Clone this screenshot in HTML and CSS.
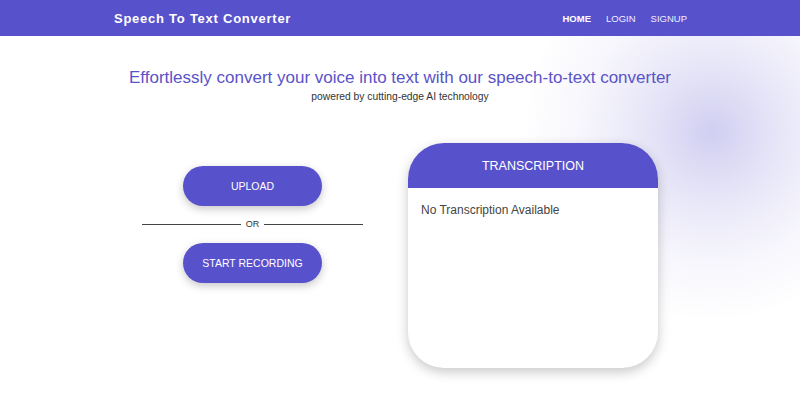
FILE: index.html
```html
<!DOCTYPE html>
<html>
<head>
<meta charset="utf-8">
<link rel="stylesheet" href="styles.css">
</head>
<body>
<nav class="navbar">
  <div class="brand">Speech To Text Converter</div>
  <ul class="nav-links">
    <li class="active">HOME</li>
    <li>LOGIN</li>
    <li>SIGNUP</li>
  </ul>
</nav>
<header class="hero">
  <h1>Effortlessly convert your voice into text with our speech-to-text converter</h1>
  <p>powered by cutting-edge AI technology</p>
</header>
<main class="content">
  <section class="actions">
    <button class="btn">UPLOAD</button>
    <div class="divider"><span>OR</span></div>
    <button class="btn">START RECORDING</button>
  </section>
  <section class="card">
    <div class="card-head">TRANSCRIPTION</div>
    <div class="card-body">No Transcription Available</div>
  </section>
</main>
</body>
</html>
```
FILE: styles.css
```css
* { box-sizing: border-box; }
html, body { margin: 0; padding: 0; }
body {
  width: 800px;
  height: 402px;
  overflow: hidden;
  font-family: "Liberation Sans", Arial, sans-serif;
  background:
    radial-gradient(circle at 712px 132px, rgba(90, 82, 205, 0.28) 0, rgba(90, 82, 205, 0.14) 70px, rgba(90, 82, 205, 0.05) 130px, rgba(255,255,255,0) 190px),
    #ffffff;
}
.navbar {
  height: 36px;
  background: #5851cc;
  display: flex;
  align-items: center;
  justify-content: space-between;
  padding: 0 113px 0 114px;
}
.brand {
  color: #fff;
  font-weight: bold;
  font-size: 13px;
  letter-spacing: 0.75px;
}
.nav-links {
  list-style: none;
  margin: 0;
  padding: 0;
  display: flex;
  gap: 15px;
  color: #f0efff;
  font-size: 9.5px;
}
.nav-links .active { font-weight: bold; color: #fff; }
.hero {
  text-align: center;
  padding-top: 31px;
}
.hero h1 {
  margin: 0;
  font-weight: normal;
  font-size: 17px;
  color: #5a53c8;
  line-height: 21px;
}
.hero p {
  margin: 3px 0 0;
  font-size: 10.3px;
  color: #333;
  line-height: 12px;
}
.content {
  display: flex;
  justify-content: center;
  align-items: flex-start;
  gap: 45px;
  margin-top: 40px;
}
.actions {
  width: 221px;
  display: flex;
  flex-direction: column;
  align-items: center;
  padding-top: 23px;
}
.btn {
  width: 139px;
  height: 40px;
  border: none;
  border-radius: 20px;
  background: #5851cc;
  color: #fff;
  font-family: "Liberation Sans", Arial, sans-serif;
  font-size: 10.5px;
  box-shadow: 0 3px 8px rgba(0, 0, 0, 0.22);
}
.divider {
  width: 221px;
  display: flex;
  align-items: center;
  gap: 5px;
  margin: 13px 0 14px;
  font-size: 9px;
  color: #333;
}
.divider::before, .divider::after {
  content: "";
  flex: 1;
  height: 1px;
  background: #444;
}
.card {
  width: 250px;
  height: 225px;
  border-radius: 36px;
  background: #fff;
  overflow: hidden;
  box-shadow: 0 4px 12px rgba(0, 0, 0, 0.22);
}
.card-head {
  height: 45px;
  background: #5851cc;
  color: #fff;
  font-size: 12.5px;
  display: flex;
  align-items: center;
  justify-content: center;
}
.card-body {
  padding: 15px 13px;
  font-size: 12px;
  color: #444;
}
```
